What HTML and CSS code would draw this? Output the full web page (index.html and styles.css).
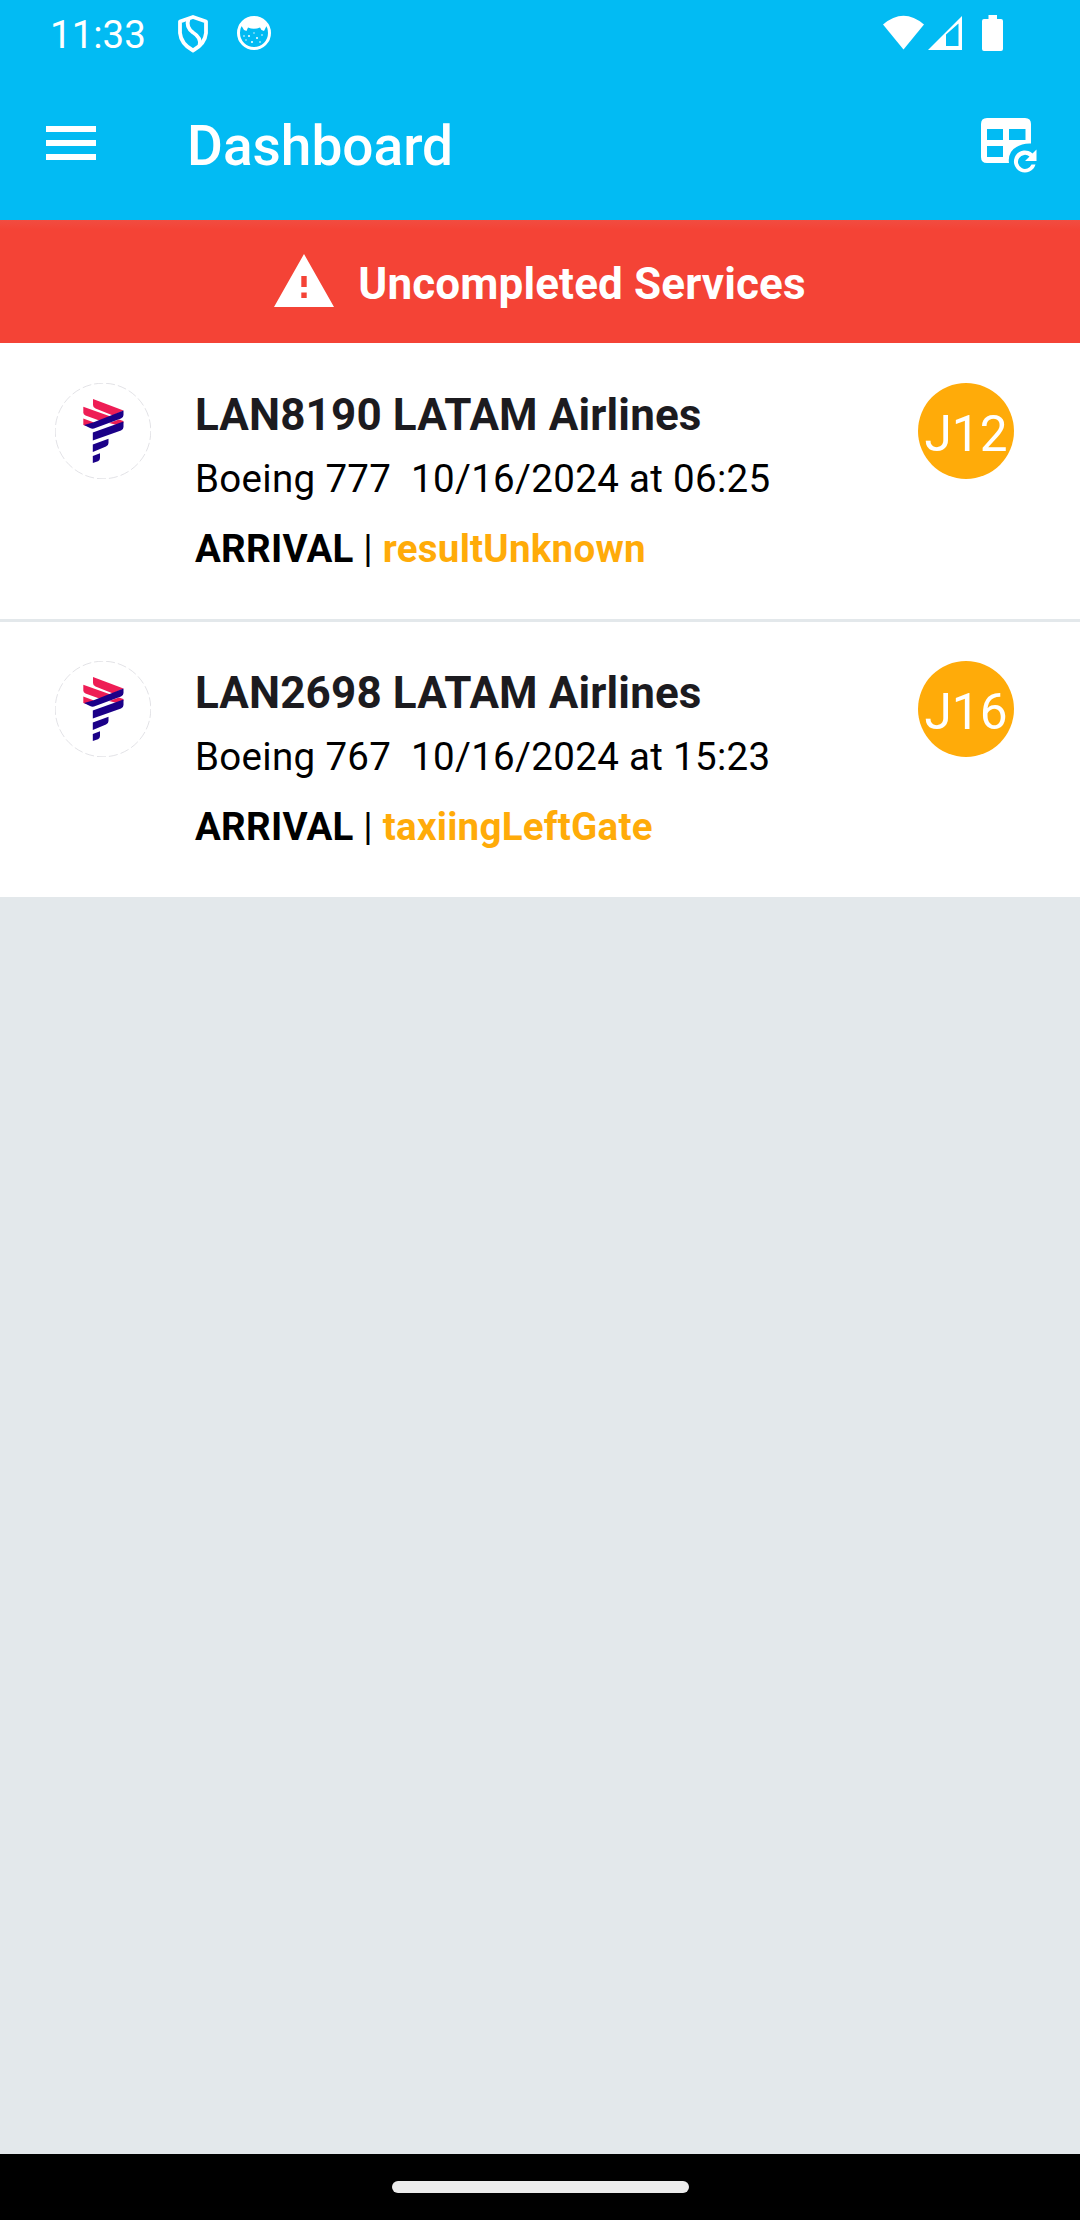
FILE: index.html
```html
<!DOCTYPE html>
<html lang="en">
<head>
<meta charset="utf-8">
<title>Dashboard</title>
<link rel="stylesheet" href="styles.css">
</head>
<body>
<svg class="defs" width="0" height="0" aria-hidden="true">
  <symbol id="latam" viewBox="0 0 96 96">
    <circle cx="48" cy="48" r="47.800" fill="#fff" stroke="#c4c4cc" stroke-width=".5" stroke-dasharray="9 3"/>
    <g fill="#ee1d55">
      <path d="M38 16 L68.500 27.500 L58 32.500 L40.500 25.500 Q38 24.500 38 22Z"/>
      <path d="M28.300 23.700 L57 34 L47 38.500 L30.500 32.500 Q28.300 31.500 28.300 29.500Z"/>
      <path d="M28.300 35.500 L43 41 L35 44 L28.300 42Z"/>
      <path d="M54 40 L64 36.500 L68.300 38 V40 L62 42Z"/>
    </g>
    <g fill="#1b0088">
      <path d="M29 42 L38 39.500 L68.500 27.500 V32 Q68.500 34.500 66 35.500 L39 45.500 Q37 46 35 45Z"/>
      <path d="M37.800 49.500 L68.500 38.500 V44 Q68.500 46.500 66 47.500 L37.800 57.500Z"/>
      <path d="M37.800 61.500 L53.500 55.800 V60 Q53.500 62.500 51 63.500 L37.800 69Z"/>
      <path d="M37.800 73 L45 70.300 V75 Q45 77.500 43 78.200 L37.800 80Z"/>
    </g>
  </symbol>
</svg>
<div class="screen">
  <header class="top">
    <div class="status">
      <div class="status-left">
        <span class="time">11:33</span>
        <svg class="shield" width="30" height="38" viewBox="0 0 30 38" fill="none" stroke="#fff" stroke-width="3.800" stroke-linejoin="round">
          <path d="M15 2 L28 6.500 V18 Q27 29 15 35.500 Q3 29 2 18 V6.500Z"/>
          <path d="M10.500 4 Q7.500 12 15 17.500 Q24 23 21.500 31"/>
        </svg>
        <svg class="face" width="34" height="34" viewBox="0 0 34 34">
          <circle cx="17" cy="17" r="15.500" fill="none" stroke="#fff" stroke-width="3"/>
          <path fill="#fff" d="M4 9 Q17 -6 30 9 L27 15 L24.500 14 L23 11.500 Q17 14 11 11.500 L9.500 15 L7 14Z"/>
          <g fill="#fff"><circle cx="12" cy="20" r="1"/><circle cx="20" cy="22" r="1"/><circle cx="15" cy="26" r="1"/><circle cx="25" cy="19" r=".8"/><circle cx="7" cy="20" r=".8"/><circle cx="23" cy="26" r=".8"/><circle cx="9" cy="24" r=".7"/><circle cx="17" cy="17" r=".7"/></g>
        </svg>
      </div>
      <svg class="signals" width="122" height="38" viewBox="0 0 122 38" fill="#fff">
        <path d="M0 9.500 Q20.500 -8 41 9.500 L20.500 34.500Z"/>
        <path fill-rule="evenodd" d="M45 35 L79 1 V35Z M63 19.500 V31 H75.500 V8.500Z"/>
        <path d="M105.500 0 H114 V4 H118 Q120 4 120 6 V34 Q120 36 118 36 H101 Q99 36 99 34 V6 Q99 4 101 4 H105.500Z"/>
      </svg>
    </div>
    <div class="appbar">
      <svg class="menu" width="50" height="34" viewBox="0 0 50 34" fill="#fff"><path d="M0 0H50V6H0Z M0 14H50V20H0Z M0 28H50V34H0Z"/></svg>
      <h1>Dashboard</h1>
      <svg class="table" width="56" height="55" viewBox="0 0 56 55" fill="#fff">
        <path fill-rule="evenodd" d="M6 0H44Q50 0 50 6V25.500Q37 25 30 34Q27 39 28 45H6Q0 45 0 39V6Q0 0 6 0Z M6 11V22H22V11Z M28 11V22H44.500V11Z M6 28V39H22V28Z"/>
        <path d="M55.500 31.500V43H44L48.500 38.500A7 7 0 1 0 50.500 46.500H54.500A11 11 0 1 1 51.500 35.500Z"/>
      </svg>
    </div>
  </header>
  <div class="alert">
    <svg width="60" height="53" viewBox="0 0 60 53" fill="#fff"><path fill-rule="evenodd" d="M30 0L60 53H0Z M27.300 22V33H32.700V22Z M27.300 38.500V44H32.700V38.500Z"/></svg>
    <span>Uncompleted Services</span>
  </div>
  <main>
    <article class="flight">
      <svg class="logo" width="96" height="96"><use href="#latam"/></svg>
      <div class="info">
        <h2>LAN8190 LATAM Airlines</h2>
        <p class="detail"><span>Boeing 777</span>&nbsp; <span>10/16/2024 at 06:25</span></p>
        <p class="state"><b>ARRIVAL</b> | <b class="result">resultUnknown</b></p>
      </div>
      <div class="gate">J12</div>
    </article>
    <article class="flight">
      <svg class="logo" width="96" height="96"><use href="#latam"/></svg>
      <div class="info">
        <h2>LAN2698 LATAM Airlines</h2>
        <p class="detail"><span>Boeing 767</span>&nbsp; <span>10/16/2024 at 15:23</span></p>
        <p class="state"><b>ARRIVAL</b> | <b class="result">taxiingLeftGate</b></p>
      </div>
      <div class="gate">J16</div>
    </article>
  </main>
  <footer><div class="pill"></div></footer>
</div>
</body>
</html>
```
FILE: styles.css
```css
* { box-sizing: border-box; }
body { margin: 0; font-family: Roboto, sans-serif; }
h1, h2, p { margin: 0; }
svg { display: block; flex: none; }
.defs { position: absolute; }
.screen { width: 1080px; height: 2220px; display: flex; flex-direction: column; background: #e3e8eb; }
.top { height: 220px; background: #02bbf3; color: #fff; }
.status { height: 70px; padding: 0 75px 0 50px; display: flex; justify-content: space-between; }
.status-left { display: flex; }
.time { width: 128px; padding-top: 12px; font-size: 38.5px; line-height: 46px; }
.shield { margin-top: 15px; }
.face { margin: 16px 0 0 29px; }
.signals { margin-top: 15px; }
.appbar { padding: 44px 43px 0 46px; display: flex; align-items: flex-start; }
.menu { margin-top: 12px; }
h1 { flex: 1; margin-left: 91px; font-size: 55px; font-weight: 500; line-height: 64px; }
.table { margin-top: 4px; }
.alert { height: 123px; padding-top: 34px; display: flex; justify-content: center; gap: 24px; background: linear-gradient(#f14d41, #f44336 10px); color: #fff; font-size: 44px; font-weight: 700; line-height: 60px; letter-spacing: .14px; }
main { display: flex; flex-direction: column; gap: 3px; }
.flight { height: 276px; padding: 40px 66px 0 55px; display: flex; align-items: flex-start; background: #fff; }
.flight:last-child { height: 275px; padding-top: 39px; }
.info { flex: 1; padding: 6px 0 0 44px; color: #000; white-space: nowrap; }
h2 { font-size: 44px; line-height: 52px; font-weight: 700; letter-spacing: .14px; color: #1c1b1f; }
.detail, .state { font-size: 38.5px; line-height: 46px; }
.detail { margin-top: 15px; letter-spacing: .32px; }
.state { margin-top: 24px; letter-spacing: .24px; }
.result { color: #ffab09; }
.gate { width: 96px; height: 96px; border-radius: 50%; background: #ffab09; color: #fff; font-size: 49.5px; line-height: 102px; text-align: center; }
footer { height: 66px; margin-top: auto; padding-top: 27px; background: #000; }
.pill { width: 297px; height: 12px; margin: 0 auto; border-radius: 6px; background: #ececec; }
```
